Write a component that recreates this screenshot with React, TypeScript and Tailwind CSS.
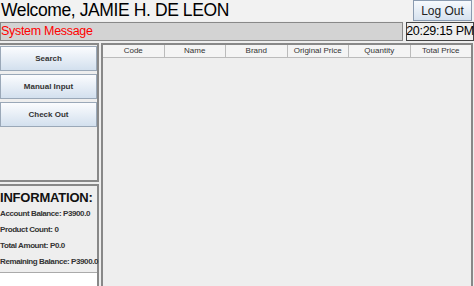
import React from "react";

export default function App() {
  const cols = ["Code", "Name", "Brand", "Original Price", "Quantity", "Total Price"];
  return (
    <div className="w-[474px] h-[286px] bg-[#eeeeee] overflow-hidden flex flex-col whitespace-nowrap" style={{ fontFamily: '"Liberation Sans", Arial, sans-serif' }}>
      <div className="h-[2px] bg-[#2a3445]" />
      <div className="h-[22px] flex items-center justify-between bg-[#f2f2f2]">
        <div className="text-[17.5px] tracking-[-0.4px] leading-none text-black pl-[1px]">Welcome, JAMIE H. DE LEON</div>
        <div className="w-[59px] h-[21px] mr-[2px] border border-[#8a9bb0] bg-gradient-to-b from-[#f7fafd] to-[#d6e2ef] flex items-center justify-center text-[12px] text-[#222]">Log Out</div>
      </div>
      <div className="h-[20px] flex items-center gap-[3px] mt-[1px]">
        <div className="flex-1 h-[19px] bg-[#d3d3d3] border border-[#888] flex items-center text-[#ff0000] text-[12.5px] tracking-[-0.3px] leading-none">System Message</div>
        <div className="w-[68px] h-[19px] border border-[#444] bg-[#eeeeee] flex items-center justify-center text-[12.5px] tracking-[-0.3px] leading-none text-black">20:29:15 PM</div>
      </div>
      <div className="flex-1 flex gap-[2px] pt-[2px]">
        <div className="w-[99px] flex flex-col gap-[2px]">
          <div className="h-[139px] border-y-2 border-r-2 border-[#888] flex flex-col gap-[3px] pt-[1px]">
            {["Search", "Manual Input", "Check Out"].map((t) => (
              <div key={t} className="h-[25px] border border-[#9aa8b8] bg-gradient-to-b from-[#fbfcfe] to-[#d3e0ee] flex items-center justify-center text-[8px] font-bold text-[#333]">
                {t}
              </div>
            ))}
          </div>
          <div className="flex-1 border-t-2 border-r-2 border-[#888] flex flex-col">
            <div className="text-[13px] font-bold text-[#111] leading-none pt-[5px] tracking-[-0.2px]">INFORMATION:</div>
            <div className="flex flex-col gap-[8px] pt-[6px] text-[8px] tracking-[-0.4px] font-bold text-[#333] leading-none">
              <div>Account Balance: P3900.0</div>
              <div>Product Count: 0</div>
              <div>Total Amount: P0.0</div>
              <div>Remaining Balance: P3900.0</div>
            </div>
            <div className="mt-[6px] h-[16px] bg-white border-t border-[#aaa]" />
          </div>
        </div>
        <div className="flex-1 border-2 border-[#888] border-b-0 mr-[1px] flex flex-col bg-[#eeeeee]">
          <div className="h-[13px] flex border-b border-[#bbb]">
            {cols.map((c, i) => (
              <div key={c} className={`flex-1 flex items-center justify-center text-[8px] text-[#333] bg-[#f4f4f4] ${i < cols.length - 1 ? "border-r border-[#bbb]" : ""}`}>
                {c}
              </div>
            ))}
          </div>
          <div className="flex-1" />
        </div>
      </div>
    </div>
  );
}
